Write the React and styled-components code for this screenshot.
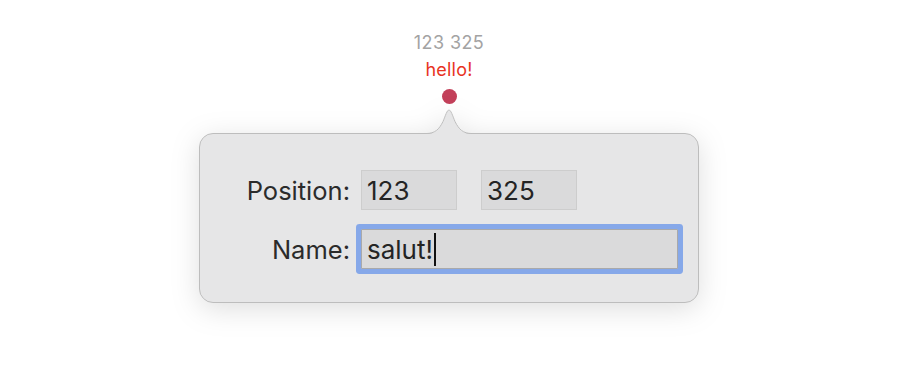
import styled, { createGlobalStyle } from "styled-components";

const GlobalStyle = createGlobalStyle`
  html, body {
    margin: 0;
    padding: 0;
    background: #ffffff;
  }
  body {
    font-family: Inter, "Liberation Sans", sans-serif;
  }
`;

const Stage = styled.div`
  width: 900px;
  height: 370px;
  box-sizing: border-box;
  padding: 33px 2px 0 0;
  display: flex;
  flex-direction: column;
  align-items: center;
`;

const Coords = styled.div`
  font-size: 18px;
  line-height: 20px;
  letter-spacing: 0.4px;
  color: #a3a3a3;
`;

const Greeting = styled.div`
  margin-top: 7px;
  font-size: 18px;
  line-height: 20px;
  letter-spacing: 0.2px;
  color: #e8331f;
`;

const Pin = styled.div`
  margin-top: 9px;
  width: 15px;
  height: 15px;
  border-radius: 50%;
  background: #c3405a;
`;

const PopoverShadow = styled.div`
  margin-top: 29px;
  filter: drop-shadow(0 6px 14px rgba(0, 0, 0, 0.13));
`;

const Popover = styled.div`
  position: relative;
  width: 500px;
  box-sizing: border-box;
  background: #e6e6e7;
  border: 1px solid #bdbdbd;
  border-radius: 14px;
  padding: 36px 20px 33px 0;
  display: grid;
  grid-template-columns: 150px 1fr;
  column-gap: 11px;
  row-gap: 19px;
  align-items: center;
`;

const Arrow = styled.svg`
  position: absolute;
  top: -25px;
  left: 50%;
  margin-left: -23px;
  overflow: visible;
`;

const Label = styled.div`
  font-size: 25.5px;
  color: #2b2b2b;
  text-align: right;
`;

const FieldRow = styled.div`
  display: flex;
  gap: 24px;
`;

const Field = styled.div`
  box-sizing: border-box;
  width: ${({ $width }) => $width}px;
  height: 40px;
  padding: 0 5px;
  display: flex;
  align-items: center;
  background: #dadadb;
  border: 1px solid ${({ $focused }) => ($focused ? "#a9a9aa" : "#cdcdcd")};
  border-radius: ${({ $focused }) => ($focused ? "1px" : "0")};
  box-shadow: ${({ $focused }) => ($focused ? "0 0 0 5px #86a8e9" : "none")};
  font-size: 26px;
  color: #242424;
`;

const Caret = styled.span`
  display: inline-block;
  width: 2px;
  height: 33px;
  margin-left: 1px;
  background: #111111;
`;

export default function App() {
  return (
    <>
      <GlobalStyle />
      <Stage>
        <Coords>123 325</Coords>
        <Greeting>hello!</Greeting>
        <Pin />
        <PopoverShadow>
          <Popover>
            <Arrow width="46" height="26" viewBox="0 0 46 26">
              <path
                d="M0 26 L0 25 C9 25 13 21 17 13 C19.5 7 21 1.5 23 1.5 C25 1.5 26.5 7 29 13 C33 21 37 25 46 25 L46 26 Z"
                fill="#e6e6e7"
              />
              <path
                d="M0 24.5 C9 24.5 13 20.5 17 12.5 C19.5 6.5 21 1 23 1 C25 1 26.5 6.5 29 12.5 C33 20.5 37 24.5 46 24.5"
                fill="none"
                stroke="#bdbdbd"
                strokeWidth="1"
              />
            </Arrow>
            <Label>Position:</Label>
            <FieldRow>
              <Field $width={96}>123</Field>
              <Field $width={96}>325</Field>
            </FieldRow>
            <Label>Name:</Label>
            <Field $width={317} $focused>
              salut!
              <Caret />
            </Field>
          </Popover>
        </PopoverShadow>
      </Stage>
    </>
  );
}
